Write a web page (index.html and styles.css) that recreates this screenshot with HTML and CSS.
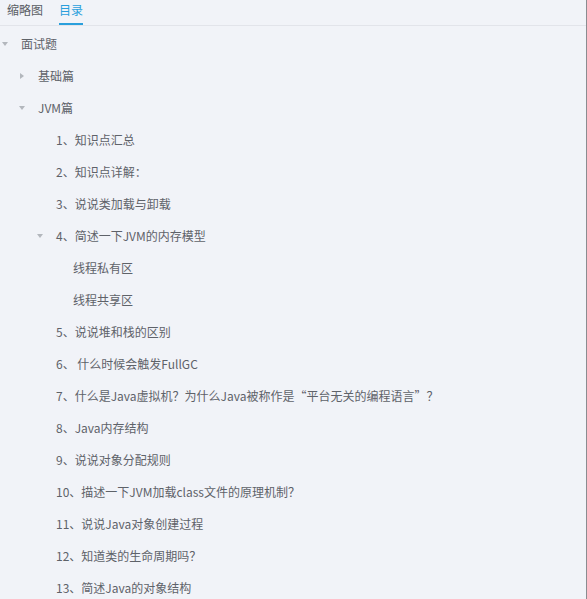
FILE: index.html
```html
<!DOCTYPE html>
<html lang="zh">
<head>
<meta charset="utf-8">
<link rel="stylesheet" href="styles.css">
</head>
<body>
<div class="panel">
  <div class="tabs">
    <div class="tab">缩略图</div>
    <div class="tab active">目录</div>
  </div>
  <ul class="tree">
    <li class="row l0"><span class="arrow down"></span><span class="label">面试题</span></li>
    <li class="row l1"><span class="arrow right"></span><span class="label">基础篇</span></li>
    <li class="row l1"><span class="arrow down"></span><span class="label">JVM篇</span></li>
    <li class="row l2"><span class="arrow none"></span><span class="label">1、知识点汇总</span></li>
    <li class="row l2"><span class="arrow none"></span><span class="label">2、知识点详解：</span></li>
    <li class="row l2"><span class="arrow none"></span><span class="label">3、说说类加载与卸载</span></li>
    <li class="row l2"><span class="arrow down"></span><span class="label">4、简述一下JVM的内存模型</span></li>
    <li class="row l3"><span class="arrow none"></span><span class="label">线程私有区</span></li>
    <li class="row l3"><span class="arrow none"></span><span class="label">线程共享区</span></li>
    <li class="row l2"><span class="arrow none"></span><span class="label">5、说说堆和栈的区别</span></li>
    <li class="row l2"><span class="arrow none"></span><span class="label">6、 什么时候会触发FullGC</span></li>
    <li class="row l2"><span class="arrow none"></span><span class="label">7、什么是Java虚拟机？为什么Java被称作是“平台无关的编程语言”？</span></li>
    <li class="row l2"><span class="arrow none"></span><span class="label">8、Java内存结构</span></li>
    <li class="row l2"><span class="arrow none"></span><span class="label">9、说说对象分配规则</span></li>
    <li class="row l2"><span class="arrow none"></span><span class="label">10、描述一下JVM加载class文件的原理机制？</span></li>
    <li class="row l2"><span class="arrow none"></span><span class="label">11、说说Java对象创建过程</span></li>
    <li class="row l2"><span class="arrow none"></span><span class="label">12、知道类的生命周期吗？</span></li>
    <li class="row l2"><span class="arrow none"></span><span class="label">13、简述Java的对象结构</span></li>
  </ul>
</div>
</body>
</html>
```
FILE: styles.css
```css
html, body {
  margin: 0;
  padding: 0;
  background: #f1f3f8;
}
body {
  font-family: "Noto Sans CJK SC", "Microsoft YaHei", "Liberation Sans", sans-serif;
  font-size: 12px;
  color: #5e6269;
}
.panel {
  width: 586px;
  height: 599px;
  border-right: 1px solid #8a8c90;
  overflow: hidden;
}
.tabs {
  display: flex;
  height: 25px;
  border-bottom: 1px solid #e2e4ea;
  padding-left: 7px;
  gap: 16px;
}
.tab {
  height: 25px;
  line-height: 20px;
  box-sizing: border-box;
  color: #595d64;
}
.tab.active {
  color: #2a9fdc;
  border-bottom: 2px solid #2a9fdc;
}
.tree {
  list-style: none;
  margin: 0;
  padding: 2px 0 0 0;
}
.row {
  display: flex;
  align-items: center;
  height: 32px;
  white-space: nowrap;
}
.l0 { padding-left: 2px; }
.l1 { padding-left: 19px; }
.l2 { padding-left: 37px; }
.l3 { padding-left: 54px; }
.arrow {
  width: 19px;
  height: 10px;
  flex: none;
  position: relative;
}
.arrow.down::before {
  content: "";
  position: absolute;
  left: 0;
  top: 3px;
  border-left: 3px solid transparent;
  border-right: 3px solid transparent;
  border-top: 4px solid #b3b7bd;
}
.arrow.right::before {
  content: "";
  position: absolute;
  left: 1px;
  top: 2px;
  border-top: 3px solid transparent;
  border-bottom: 3px solid transparent;
  border-left: 4px solid #b3b7bd;
}
.label {
  line-height: 16px;
}
```
